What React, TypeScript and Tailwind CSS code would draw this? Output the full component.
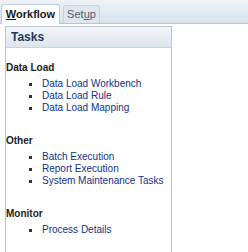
export default function App() {
  const groups = [
    { title: "Data Load", items: ["Data Load Workbench", "Data Load Rule", "Data Load Mapping"] },
    { title: "Other", items: ["Batch Execution", "Report Execution", "System Maintenance Tasks"] },
    { title: "Monitor", items: ["Process Details"] },
  ];
  return (
    <div className="w-[248px] h-[252px] bg-white overflow-hidden relative" style={{ fontFamily: "'Liberation Sans', Arial, sans-serif" }}>
      <div className="h-[24px] flex items-end gap-[3px] pl-[1px] border-b border-[#b7c7d7] bg-gradient-to-b from-[#eef3f8] to-[#d6e2ed]">
        <div className="h-[20px] w-[59px] mb-[-1px] bg-white border border-b-0 border-[#c0ceda] rounded-t-[3px] flex items-center justify-center text-[11px] font-bold text-[#1b1b1b]">
          <span><span className="underline">W</span>orkflow</span>
        </div>
        <div className="h-[18px] w-[37px] bg-[#dfe6ee] border border-b-0 border-[#c6d2dd] rounded-t-[3px] flex items-center justify-center text-[11px] text-[#555b66]">
          <span>Set<span className="underline">u</span>p</span>
        </div>
      </div>
      <div className="ml-[5px] mt-[2px] w-[167px] h-[230px] border-l border-r border-t border-[#b9c6d3]">
        <div className="h-[21px] flex items-center pl-[5px] border-b border-[#c9d4de] bg-gradient-to-b from-[#f3f6f9] to-[#dde5ee] text-[12px] font-bold text-[#1d3b57]">
          Tasks
        </div>
        <div className="pt-[13px] text-[10px] leading-[12px]">
          {groups.map((g) => (
            <div key={g.title} className="mb-[20px]">
              <div className="font-bold text-[#222] h-[17px] pt-[1px]">{g.title}</div>
              <ul>
                {g.items.map((it) => (
                  <li key={it} className="flex items-center h-[12px] text-[#11328a] whitespace-nowrap">
                    <span className="w-[3px] h-[3px] bg-[#333] ml-[23px] mr-[10px] shrink-0" />
                    {it}
                  </li>
                ))}
              </ul>
            </div>
          ))}
        </div>
      </div>
    </div>
  );
}
